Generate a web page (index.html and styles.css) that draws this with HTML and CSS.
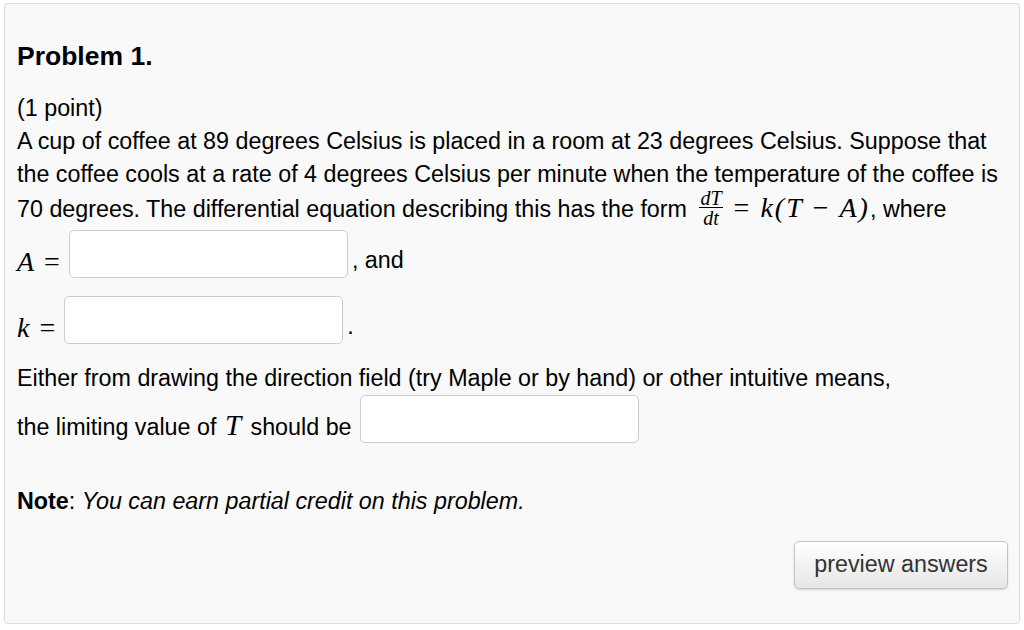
FILE: index.html
```html
<!DOCTYPE html>
<html lang="en">
<head>
    <meta charset="UTF-8">
    <title>Problem 1</title>
    <link rel="stylesheet" href="styles.css">
</head>
<body>
    <div class="problem">
        <h2 class="title">Problem 1.</h2>

        <p class="text">
            (1 point)<br>
            A cup of coffee at 89 degrees Celsius is placed in a room at 23 degrees Celsius. Suppose that<br>
            the coffee cools at a rate of 4 degrees Celsius per minute when the temperature of the coffee is<br>
            70 degrees. The differential equation describing this has the form
            <span class="math eq"><span class="frac"><span class="num">dT</span><span class="den">dt</span></span><span class="op">=</span>k(T<span class="op">−</span>A)</span>, where
        </p>

        <div class="row row-a">
            <span class="math label"><i>A</i><span class="op">=</span></span>
            <input type="text" class="answer">
            <span class="after">, and</span>
        </div>

        <div class="row row-k">
            <span class="math label"><i>k</i><span class="op">=</span></span>
            <input type="text" class="answer">
            <span class="after">.</span>
        </div>

        <p class="text either">Either from drawing the direction field (try Maple or by hand) or other intuitive means,</p>

        <div class="row row-t">
            <span class="after">the limiting value of <span class="math t">T</span> should be</span>
            <input type="text" class="answer">
        </div>

        <p class="text note"><b>Note</b>: <i>You can earn partial credit on this problem.</i></p>

        <div class="actions">
            <button class="preview">preview answers</button>
        </div>
    </div>
</body>
</html>
```

FILE: styles.css
```css
body {
    margin: 0;
    padding: 0;
    font-family: "Liberation Sans", Arial, sans-serif;
    background-color: #fff;
    color: #000;
}

.problem {
    margin: 3px 4px 0 4px;
    height: 621px;
    box-sizing: border-box;
    background-color: #f9f9f9;
    border: 1px solid #dcdcdc;
    border-radius: 4px;
    padding: 37px 11px 0 12px;
}

.title {
    margin: 0;
    font-size: 26.5px;
    line-height: 30px;
    font-weight: bold;
}

.text {
    margin: 21px 0 0 0;
    font-size: 23.3px;
    line-height: 33px;
    white-space: nowrap;
}

.math {
    font-family: "Liberation Serif", "Times New Roman", serif;
    font-style: italic;
    font-size: 28px;
}

.math .op {
    font-style: normal;
    margin: 0 9px;
}

.eq {
    letter-spacing: 2px;
}

.frac {
    display: inline-flex;
    flex-direction: column;
    align-items: center;
    vertical-align: middle;
    font-size: 20px;
    line-height: 16px;
    letter-spacing: 0;
    margin: 0 2px 0 6px;
    position: relative;
    top: -3px;
}

.frac .num {
    border-bottom: 1px solid #000;
    padding: 0 1px 1px 1px;
}

.frac .den {
    padding-top: 2px;
}

.row {
    display: flex;
    align-items: center;
    height: 48px;
    font-size: 23.3px;
}

.row-a {
    margin-top: 1px;
}

.row-k {
    margin-top: 18px;
}

.row .label {
    padding-top: 16px;
    white-space: nowrap;
    font-size: 28px;
}

.row .label .op {
    margin: 0 9px 0 10px;
}

.row .after {
    padding-top: 14px;
    margin-left: 4px;
    white-space: nowrap;
}

.row-t .after {
    margin-left: 0;
    margin-right: 8px;
}

.math.t {
    font-size: 29px;
    margin: 0 3px 0 2px;
}

.answer {
    width: 279px;
    height: 48px;
    box-sizing: border-box;
    border: 1px solid #cccccc;
    border-radius: 5px;
    background-color: #fff;
    font-size: 20px;
    padding: 4px 8px;
    margin: 0;
}

.either {
    margin-top: 18px;
}

.row-t {
    margin-top: 0;
}

.note {
    margin-top: 42px;
}

.actions {
    display: flex;
    justify-content: flex-end;
    margin-top: 23px;
}

.preview {
    width: 214px;
    height: 48px;
    font-family: "Liberation Sans", Arial, sans-serif;
    font-size: 23.3px;
    color: #333;
    background: linear-gradient(#ffffff, #e6e6e6);
    border: 1px solid #c4c4c4;
    border-radius: 5px;
    box-shadow: 0 1px 2px rgba(0, 0, 0, 0.15);
    cursor: pointer;
}
```
